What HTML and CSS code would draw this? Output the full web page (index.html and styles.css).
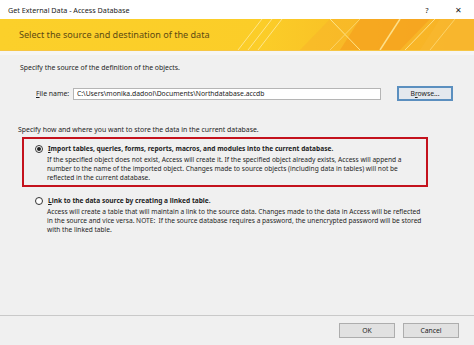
FILE: index.html
```html
<!DOCTYPE html>
<html>
<head>
    <title>Get External Data - Access Database</title>
    <link rel="stylesheet" href="styles.css">
</head>
<body>
    <div class="dialog">
        <!-- Title bar -->
        <div class="titlebar">
            <span class="title">Get External Data - Access Database</span>
            <span class="help">?</span>
            <span class="close">&#x2715;</span>
        </div>

        <!-- Yellow banner -->
        <div class="banner">
            <svg class="banner-art" width="474" height="31" viewBox="0 0 474 31">
                <polygon points="330,0 474,0 474,31 300,31" fill="#f7b52a" opacity="0.55"/>
                <polygon points="360,0 430,0 400,31 340,31" fill="#f59d1c" opacity="0.6"/>
                <polygon points="440,0 474,0 474,31 420,31" fill="#f8b830" opacity="0.7"/>
                <line x1="262" y1="0" x2="238" y2="31" stroke="#fde58a" stroke-width="1"/>
                <line x1="272" y1="0" x2="248" y2="31" stroke="#fde58a" stroke-width="1"/>
                <line x1="282" y1="0" x2="258" y2="31" stroke="#fde58a" stroke-width="1"/>
                <line x1="330" y1="0" x2="360" y2="31" stroke="#fde58a" stroke-width="1"/>
                <line x1="360" y1="0" x2="330" y2="31" stroke="#fbd36a" stroke-width="1"/>
                <line x1="400" y1="0" x2="380" y2="31" stroke="#fde08a" stroke-width="1.5"/>
                <line x1="435" y1="0" x2="405" y2="31" stroke="#fde08a" stroke-width="1"/>
                <line x1="455" y1="0" x2="430" y2="31" stroke="#fbd36a" stroke-width="1"/>
            </svg>
            <span class="banner-text">Select the source and destination of the data</span>
        </div>

        <div class="content">
            <p class="section">Specify the source of the definition of the objects.</p>

            <div class="file-row">
                <label for="file"><u>F</u>ile name:</label>
                <input type="text" id="file" value="C:\Users\monika.dadool\Documents\Northdatabase.accdb">
                <button class="btn browse">B<u>r</u>owse...</button>
            </div>

            <p class="section store">Specify how and where you want to store the data in the current database.</p>

            <div class="option selected">
                <div class="option-head">
                    <span class="radio checked"></span>
                    <span class="option-title"><u>I</u>mport tables, queries, forms, reports, macros, and modules into the current database.</span>
                </div>
                <p class="desc">If the specified object does not exist, Access will create it. If the specified object already exists, Access will append a<br>number to the name of the imported object. Changes made to source objects (including data in tables) will not be<br>reflected in the current database.</p>
            </div>

            <div class="option">
                <div class="option-head">
                    <span class="radio"></span>
                    <span class="option-title"><u>L</u>ink to the data source by creating a linked table.</span>
                </div>
                <p class="desc">Access will create a table that will maintain a link to the source data. Changes made to the data in Access will be reflected<br>in the source and vice versa. NOTE:&nbsp; If the source database requires a password, the unencrypted password will be stored<br>with the linked table.</p>
            </div>
        </div>

        <div class="footer">
            <button class="btn">OK</button>
            <button class="btn">Cancel</button>
        </div>
    </div>
</body>
</html>
```

FILE: styles.css
```css
body {
    margin: 0;
    font-family: "Noto Sans", "Open Sans", sans-serif;
    background-color: #f0f0f0;
    color: #1e1e1e;
}
.dialog {
    width: 474px;
    height: 345px;
    display: flex;
    flex-direction: column;
    background-color: #f0f0f0;
    overflow: hidden;
}
.titlebar {
    height: 19px;
    background-color: #ffffff;
    display: flex;
    align-items: center;
    padding-left: 8px;
    font-size: 7.2px;
    color: #222;
}
.title {
    flex: 1;
}
.help {
    width: 30px;
    text-align: center;
    font-size: 7.5px;
}
.close {
    width: 32px;
    text-align: center;
    font-size: 8px;
}
.banner {
    position: relative;
    height: 31px;
    background: linear-gradient(90deg, #fbd02a 0%, #fbcd28 55%, #f9bf25 75%, #f7ae22 100%);
    display: flex;
    align-items: center;
    padding-left: 19px;
    border-bottom: 1px solid #f6c645;
}
.banner-art {
    position: absolute;
    left: 0;
    top: 0;
}
.banner-text {
    position: relative;
    font-size: 9.1px;
    color: #5d4a12;
}
.content {
    flex: 1;
    padding: 8px 0 0 20px;
    border-top: 4px solid #f5f5f5;
}
.section {
    margin: 0;
    font-size: 6.9px;
    line-height: 9px;
}
.file-row {
    display: flex;
    align-items: center;
    margin-top: 14px;
    padding-left: 16px;
    font-size: 6.9px;
}
.file-row label {
    width: 37px;
}
.file-row input {
    width: 308px;
    height: 12px;
    box-sizing: border-box;
    padding: 0 3px;
    border: 1px solid #b5b5b5;
    background-color: #ffffff;
    font-family: inherit;
    font-size: 6.8px;
    color: #222;
}
.btn {
    width: 56px;
    height: 15px;
    border: 1px solid #adadad;
    background-color: #e1e1e1;
    font-family: inherit;
    font-size: 6.8px;
    color: #222;
    padding: 0;
}
.browse {
    margin-left: 16px;
    border: 2px solid #5b8fbf;
    background-color: #e3e8ee;
}
.store {
    margin-top: 24px;
    margin-left: -2px;
}
.option {
    width: 406px;
    margin-left: 2px;
    padding: 5px 0 3px 0;
    box-sizing: border-box;
    border: 2px solid transparent;
}
.option.selected {
    margin-top: 3px;
    border-color: #c4121d;
    margin-bottom: 2px;
}
.option-head {
    display: flex;
    align-items: center;
    padding-left: 11px;
    font-size: 6.6px;
    font-weight: bold;
    line-height: 9px;
}
.radio {
    width: 8px;
    height: 8px;
    border: 1px solid #333;
    border-radius: 50%;
    background-color: #fff;
    box-sizing: border-box;
    margin-right: 5px;
    display: flex;
    align-items: center;
    justify-content: center;
}
.radio.checked::after {
    content: "";
    width: 4px;
    height: 4px;
    border-radius: 50%;
    background-color: #222;
}
.desc {
    margin: 2px 0 0 23px;
    font-size: 6.6px;
    line-height: 9px;
    white-space: nowrap;
}
.footer {
    height: 29px;
    border-top: 1px solid #c9c9c9;
    display: flex;
    justify-content: flex-end;
    align-items: center;
    gap: 8px;
    padding-right: 15px;
}
```
